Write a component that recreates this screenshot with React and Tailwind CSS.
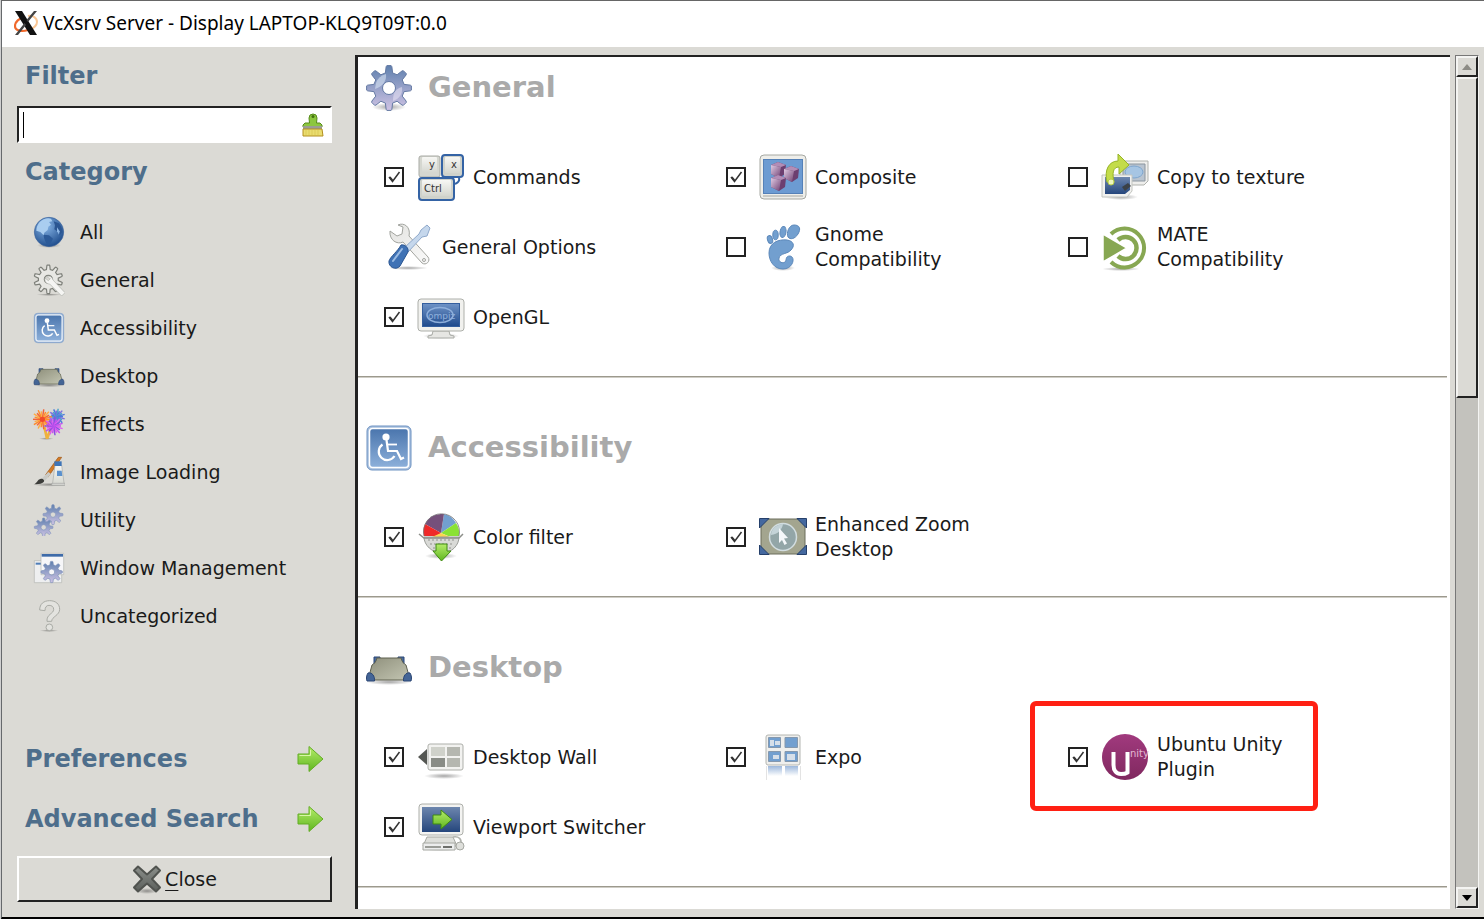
import { useState } from "react";

// Outline of a cog wheel centred on cx, cy
const gearPath = (cx, cy, outer, inner, teeth) => {
  const step = (Math.PI * 2) / teeth;
  const points = [];
  for (let i = 0; i < teeth; i++) {
    const mid = i * step - Math.PI / 2;
    [
      [inner, -0.3],
      [outer - 1, -0.17],
      [outer, -0.12],
      [outer, 0.12],
      [outer - 1, 0.17],
      [inner, 0.3],
    ].forEach(([r, t]) => {
      const a = mid + t * step;
      points.push(
        `${(cx + r * Math.cos(a)).toFixed(2)} ${(cy + r * Math.sin(a)).toFixed(2)}`
      );
    });
  }
  return `M${points.join("L")}Z`;
};

const circlePath = (cx, cy, r) =>
  `M${cx - r} ${cy}a${r} ${r} 0 1 0 ${r * 2} 0a${r} ${r} 0 1 0 ${-r * 2} 0Z`;

const Gradient = ({ id, from, to, x2 = 0, y2 = 1 }) => (
  <linearGradient id={id} x1="0" y1="0" x2={x2} y2={y2}>
    <stop offset="0" stopColor={from} />
    <stop offset="1" stopColor={to} />
  </linearGradient>
);

const Gradients = () => (
  <svg width="0" height="0" className="absolute" aria-hidden="true">
    <defs>
      <Gradient id="gear" from="#5f80ae" to="#cfc3e4" />
      <Gradient id="access" from="#4a75ad" to="#8db0da" />
      <Gradient id="desk" from="#8f907c" to="#c3c5b2" x2={1} />
      <Gradient id="screen" from="#6f93c6" to="#1f4a8c" />
      <Gradient id="navy" from="#6d86ae" to="#25467c" />
      <Gradient id="green" from="#b4ec6a" to="#5fb61f" />
      <Gradient id="key" from="#f7f7f4" to="#d4d6cf" />
      <Gradient id="plum" from="#a13a7e" to="#80285f" />
      <Gradient id="cube" from="#e0cbe3" to="#6f4073" x2={1} />
      <Gradient id="steel" from="#8b8f8b" to="#5b5f5b" />
      <Gradient id="fade" from="#9db8dc" to="#ffffff" />
      <Gradient id="tool" from="#e3e3e0" to="#fafafa" x2={1} />
      <radialGradient id="globe" cx="0.4" cy="0.3" r="0.7">
        <stop offset="0" stopColor="#86b4e6" />
        <stop offset="1" stopColor="#22508f" />
      </radialGradient>
      <radialGradient id="shadow">
        <stop offset="0" stopColor="#000" stopOpacity="0.35" />
        <stop offset="1" stopColor="#000" stopOpacity="0" />
      </radialGradient>
    </defs>
  </svg>
);

const Icon = ({ className = "size-12", children }) => (
  <svg
    viewBox="0 0 48 48"
    className={`${className} shrink-0`}
    fill="none"
    aria-hidden="true"
  >
    {children}
  </svg>
);

const XLogo = () => (
  <svg viewBox="0 0 24 24" className="size-6 shrink-0" aria-hidden="true">
    <path
      d="M11 6C5 7 1 11 1 15c0 5 7 6 13 4"
      fill="none"
      stroke="#f0692c"
      strokeWidth="2.200"
    />
    <path
      d="M14 5c5-1 9 2 9 6 0 3-3 6-6 7"
      fill="none"
      stroke="#fbc795"
      strokeWidth="2"
    />
    <path d="M1 0h7l15 24h-7z" fill="#111" />
    <path d="M20 0h3L14 11l-1.500-2zM1 24h3l8-10-1.500-2z" fill="#444" />
  </svg>
);

const GearIcon = ({ className }) => (
  <Icon className={className}>
    <ellipse cx="24" cy="43" rx="17" ry="4" fill="url(#shadow)" />
    <path
      d={gearPath(24, 24, 22.5, 15.5, 8) + circlePath(24, 24, 6.5)}
      fill="url(#gear)"
      fillRule="evenodd"
      stroke="#6479a3"
      strokeLinejoin="round"
    />
    <path d="M11 19a14 14 0 0 1 10-9c1 7-4 13-11 15z" fill="#d8e4f4" opacity="0.6" />
    <path d="M37 23c-7 2-9 6-9 14 6-2 10-7 9-14z" fill="#eee8f8" opacity="0.5" />
  </Icon>
);

const AccessIcon = ({ className }) => (
  <Icon className={className}>
    <rect x="2" y="2" width="44" height="44" rx="5" fill="#a9c1df" stroke="#6f93c2" />
    <rect x="4.500" y="4.500" width="39" height="39" rx="3" fill="url(#access)" stroke="#fff" strokeWidth="1.500" />
    <circle cx="21" cy="13" r="3.600" fill="#fff" />
    <path d="M21.500 16l1.500 11h9l4 8 3-1.500" stroke="#fff" strokeWidth="2.200" />
    <path d="M22 20.500h10" stroke="#fff" strokeWidth="1.800" />
    <path d="M17.500 20.500a8.500 8.500 0 1 0 12 11.500" stroke="#fff" strokeWidth="2.200" />
  </Icon>
);

const DesktopIcon = ({ className }) => (
  <Icon className={className}>
    <ellipse cx="24" cy="38" rx="23" ry="3" fill="url(#shadow)" />
    <path d="M9 13h6v5l-6 2zM33 13h6v7l-6-2z" fill="#4a6a9c" stroke="#2b4674" />
    <path
      d="M12 14h24c1 4 3 6 5 7l3 11c-3 1-4 3-4 4H8c0-2-1-3-4-4l3-11c2-1 4-3 5-7z"
      fill="url(#desk)"
      stroke="#5e604f"
    />
    <path
      d="M3 29c4-1 7 3 6.500 8H2c-1-2-.5-6 1-8zM45 29c-4-1-7 3-6.500 8H46c1-2 .5-6-1-8z"
      fill="#446596"
      stroke="#2b4674"
    />
  </Icon>
);

const GlobeIcon = ({ className }) => (
  <Icon className={className}>
    <ellipse cx="24" cy="44" rx="18" ry="4" fill="url(#shadow)" />
    <circle cx="24" cy="24" r="22" fill="url(#globe)" stroke="#3b629c" />
    <path
      d="M10 9c5-5 12-7 17-5l2 4-5 1 3 4-4 3-1 5-5 4-1 4-5-5-6-2c0-5 2-9 5-13z"
      fill="#a9cdf0"
    />
    <path d="M16 28l8 1 6 5-3 6-5 5c-2-5-6-10-6-17z" fill="#2c5a98" />
    <path d="M31 8l8 3c3 4 5 8 5 13l-4 5-4-6-4-3 1-6z" fill="#2b5692" />
    <path d="M36 17l4 6-1 5-3-5z" fill="#8fb8e6" />
  </Icon>
);

const SettingsIcon = ({ className }) => (
  <Icon className={className}>
    <ellipse cx="24" cy="46" rx="19" ry="2" fill="url(#shadow)" />
    <path
      d={gearPath(23, 23, 21.5, 15, 10) + circlePath(23, 23, 6)}
      fill="#e8e8e4"
      fillRule="evenodd"
      stroke="#7d7f79"
      strokeWidth="1.800"
    />
    <path
      d="M20 19c4-2 9 0 10 5l18 19-5 5-18-18c-5 0-8-4-7-9l5 4 3-3z"
      fill="#f5f5f3"
      stroke="#aeb0aa"
    />
  </Icon>
);

const EffectsIcon = ({ className }) => {
  const burst = (cx, cy, r, colors) =>
    Array.from({ length: 22 }, (_, i) => {
      const a = (i * Math.PI * 2) / 22;
      const len = i % 2 ? r : r - 3;
      return (
        <path
          key={`${cx}-${i}`}
          d={`M${cx} ${cy}L${cx + len * Math.cos(a)} ${cy + len * Math.sin(a)}`}
          stroke={colors[i % colors.length]}
          strokeWidth="2.200"
        />
      );
    });
  return (
    <Icon className={className}>
      <ellipse cx="20" cy="46" rx="11" ry="2" fill="url(#shadow)" />
      <path d="M17 28l4 18M27 30l-6 16" stroke="#efb23c" strokeWidth="4" />
      {burst(36, 13, 12, ["#4c7ddb", "#7b6ee0", "#4ba3c9"])}
      {burst(14, 17, 15, ["#ff8a2a", "#ffab45", "#f2643a"])}
      {burst(31, 27, 14, ["#c44ff0", "#e05cf2", "#8a4fe0"])}
      <circle cx="14" cy="17" r="4" fill="#f04a2c" />
    </Icon>
  );
};

const ImageIcon = ({ className }) => (
  <Icon className={className}>
    <ellipse cx="25" cy="43" rx="24" ry="3" fill="url(#shadow)" />
    <path d="M38 2h5L23 31l-4-3z" fill="#d47a26" stroke="#9b5413" />
    <path d="M23 24l4 3-9 10-5-3z" fill="#c9cac6" />
    <path d="M1 42c5 0 5-7 11-8 4 0 6 3 4 5-3 3-10 4-15 3z" fill="#3c3d3a" />
    <path d="M33 14h10l4 30H29z" fill="url(#key)" stroke="#a9aba6" />
    <path d="M32 8h11v7H32z" fill="#3f75b7" />
    <path d="M36 22h7l1 8h-8z" fill="#5a90cd" />
    <path d="M28 41h20v3H28z" fill="#d8d9d5" stroke="#999" strokeWidth="0.800" />
  </Icon>
);

const UtilityIcon = ({ className }) => (
  <Icon className={className}>
    <path
      d={gearPath(30, 16, 15, 10, 8) + circlePath(30, 16, 4)}
      fill="url(#gear)"
      fillRule="evenodd"
      stroke="#8496bd"
    />
    <path
      d={gearPath(16, 35, 14, 9.5, 8) + circlePath(16, 35, 4)}
      fill="url(#gear)"
      fillRule="evenodd"
      stroke="#8496bd"
    />
  </Icon>
);

const WindowIcon = ({ className }) => (
  <Icon className={className}>
    <path d="M2 13h41v33H2z" fill="#eeeff0" stroke="#b3b5b2" />
    <path d="M4 16h9v3H4z" fill="#4f7db7" />
    <path d="M12 2h34v32H12z" fill="#f6f6f8" stroke="#b3b5b2" />
    <path d="M13 3h32v4H13z" fill="#3e6ba9" />
    <path
      d={gearPath(28, 30, 16, 11, 8) + circlePath(28, 30, 4.5)}
      fill="url(#gear)"
      fillRule="evenodd"
      stroke="#7c8fb8"
    />
  </Icon>
);

const QuestionIcon = ({ className }) => (
  <Icon className={className}>
    <ellipse cx="24" cy="46" rx="14" ry="2" fill="url(#shadow)" />
    <path
      d="M10 15C10 6 16 1 25 1s15 5 15 13c0 9-12 11-12 18h-7c-1-11 10-11 10-18 0-4-3-6-7-6-4 0-6 3-6 8z"
      fill="#e3e3df"
      stroke="#a9aba5"
      strokeWidth="1.500"
    />
    <circle cx="24.500" cy="41" r="5" fill="#e3e3df" stroke="#a9aba5" strokeWidth="1.500" />
  </Icon>
);

const CommandsIcon = () => (
  <Icon>
    <path d="M41 23c3 4 0 8-5 8" stroke="#3463a5" strokeWidth="2" />
    <rect x="2" y="3" width="21" height="21" rx="2" fill="#d5d7d0" stroke="#a9aba5" />
    <rect x="5" y="4" width="15" height="16" rx="1" fill="url(#key)" />
    <rect x="25" y="2" width="21" height="22" rx="3" fill="#cfd2cb" stroke="#3463a5" strokeWidth="2" />
    <rect x="28" y="4" width="15" height="16" rx="1" fill="url(#key)" />
    <rect x="2" y="25" width="35" height="22" rx="3" fill="#cfd2cb" stroke="#3463a5" strokeWidth="2" />
    <rect x="5" y="27" width="29" height="16" rx="1" fill="url(#key)" />
    <g fill="#333" fontFamily="DejaVu Sans, sans-serif" fontSize="10">
      <text x="12" y="15">y</text>
      <text x="34" y="15">x</text>
      <text x="7" y="39">Ctrl</text>
    </g>
  </Icon>
);

const Cube = ({ x, y }) => (
  <g transform={`translate(${x} ${y})`}>
    <path d="M0 3l7-3 8 3-1 9-6 4-8-4z" fill="#6c3f70" />
    <path d="M0 3l7-3 8 3-5 2z" fill="#b28db6" />
    <path d="M0 3l10 2-2 11-8-4z" fill="url(#cube)" />
  </g>
);

const CompositeIcon = () => (
  <Icon>
    <rect x="1" y="2" width="46" height="44" rx="4" fill="#eeeeea" stroke="#a6a8a2" />
    <path d="M4 43h40" stroke="#c9cac6" strokeWidth="2" />
    <rect x="4.500" y="6.500" width="39" height="34" fill="#6c9bd2" stroke="#5581b8" />
    <Cube x="12" y="9" />
    <Cube x="25" y="13" />
    <Cube x="12" y="22" />
  </Icon>
);

const CopyIcon = () => (
  <Icon>
    <ellipse cx="20" cy="44" rx="17" ry="3" fill="url(#shadow)" />
    <path d="M19 8h28v20l-4 4H19z" fill="#eeeeec" stroke="#b0b2ad" />
    <path d="M22 11h22v17H22z" fill="#b9c4d0" stroke="#8c969f" />
    <ellipse cx="33" cy="19" rx="9" ry="6" fill="#a6c5e3" stroke="#7ea6cf" />
    <path d="M1 22h30v16l-5 6H1z" fill="#f1f1ef" stroke="#c3c5c0" />
    <path d="M4 24h25v13l-5 4H4z" fill="url(#navy)" />
    <path d="M21 34l6-4 3 3-6 5z" fill="#3b4147" />
    <path
      d="M6 29C3 17 8 8 17 8V1l11 11-10 9v-7c-6 0-7 6-5 15z"
      fill="#c3dc4a"
      stroke="#97b428"
    />
    <circle cx="10" cy="29" r="3" fill="#edf5bd" stroke="#b9cf45" />
  </Icon>
);

const ToolsIcon = () => (
  <Icon>
    <ellipse cx="22" cy="45" rx="20" ry="2" fill="url(#shadow)" />
    <path
      d="M4 8l7 5 5-2 1-7-5-2c6-3 13 2 11 11l19 21c3 4-2 9-6 6L17 19C11 22 3 17 4 8z"
      fill="url(#tool)"
      stroke="#a2a49f"
    />
    <circle cx="38" cy="37" r="1.500" stroke="#a2a49f" />
    <path d="M35 7l6-5 3 3-3 8-5 1-14 15-4-4 15-14z" fill="#c5d7ec" stroke="#8fa9cb" />
    <path
      d="M15 22c4-1 8 3 7 7l-8 14c-4 5-12 1-11-5 1-4 9-10 12-16z"
      fill="#3f72b5"
      stroke="#2a5591"
    />
    <path d="M16 26L7 38" stroke="#9bbce4" strokeWidth="2" strokeLinecap="round" />
  </Icon>
);

const GnomeIcon = () => (
  <Icon>
    <ellipse cx="24" cy="45" rx="12" ry="3" fill="url(#shadow)" />
    <g fill="#729fcf" stroke="#5c88ba" transform="translate(1 0)">
      <path d="M34 2c6 0 7 4 4 9s-8 6-10 3c-2-4 1-12 6-12z" />
      <ellipse cx="23" cy="9" rx="3" ry="5.500" transform="rotate(10 23 9)" />
      <ellipse cx="15.500" cy="12" rx="2.700" ry="4.800" />
      <ellipse cx="10" cy="16.500" rx="2.500" ry="4" transform="rotate(-18 10 16.500)" />
      <path d="M9 30c0-10 9-14 18-13 7 1 8 6 4 10-3 4-11 3-12 8-1 4 4 6 6 4s0-6 5-6c6 1 3 13-7 13C14 46 9 38 9 30z" />
    </g>
  </Icon>
);

const MateIcon = () => (
  <Icon>
    <ellipse cx="20" cy="46" rx="19" ry="2" fill="url(#shadow)" />
    <path d="M10 11a19.500 19.500 0 1 1 0 28" stroke="#87a752" strokeWidth="4" />
    <path d="M17 17a11 11 0 1 1 0 16" stroke="#87a752" strokeWidth="4.500" />
    <path d="M2 11l24 14L2 39z" fill="#87a752" stroke="#fff" strokeWidth="1.500" />
  </Icon>
);

const OpenGLIcon = () => (
  <Icon>
    <ellipse cx="24" cy="43" rx="18" ry="3" fill="url(#shadow)" />
    <path d="M16 38h16l1 4 4 1v2H11v-2l4-1z" fill="#e6e6e3" stroke="#a9aba6" />
    <rect x="1" y="6" width="46" height="32" rx="3" fill="#f1f1ee" stroke="#adafaa" />
    <rect x="5.500" y="10.500" width="37" height="23" fill="url(#screen)" stroke="#355f9e" />
    <ellipse cx="23" cy="22" rx="13" ry="7.500" stroke="#8fb0dc" strokeWidth="1.500" />
    <text
      x="11"
      y="26"
      fill="#8fb0dc"
      fontFamily="DejaVu Sans, sans-serif"
      fontSize="9"
    >
      ompiz
    </text>
  </Icon>
);

const ColorFilterIcon = () => (
  <Icon>
    <ellipse cx="24" cy="43" rx="16" ry="3" fill="url(#shadow)" />
    <path d="M24 20V1a18 18 0 0 0-16 10z" fill="#75507b" />
    <path d="M24 20L27 1a18 18 0 0 1 12 9z" fill="#729fcf" />
    <path d="M24 20L27 1H23z" fill="#75507b" />
    <path d="M24 20L8 11a18 18 0 0 0-1 12h13z" fill="#ef2929" />
    <path d="M24 20l15-10a18 18 0 0 1 3 13H31z" fill="#8ae234" />
    <path d="M24 20l9 4H15z" fill="#fcd64f" />
    <path d="M7 23a18 18 0 1 1 35 0" stroke="#777" strokeWidth="0.800" />
    <path d="M7 24h35c0 8-7 16-17 16S7 32 7 24z" fill="#d9dad7" stroke="#9b9d98" />
    <path
      d="M11 27h27M13 31h24M16 35h18"
      stroke="#a9aba6"
      strokeWidth="1.500"
      strokeDasharray="2 2"
    />
    <path d="M2 21l5 4h35l4-4" stroke="#8d8f8a" strokeWidth="1.500" />
    <path d="M19 31h11v7h4L24.500 48 16 38h3z" fill="url(#green)" stroke="#3f8a12" />
  </Icon>
);

const ZoomDesktopIcon = () => (
  <Icon>
    <path d="M2 6h44v35H2z" fill="#a3a58f" stroke="#6b6d5b" />
    <g fill="#44689f" stroke="#26406b">
      <path d="M.5 5.500H10L.5 15zM47.500 5.500H38l9.500 9.500zM.5 41.500H10L.5 32zM47.500 41.500H38l9.500-9.500z" />
    </g>
    <circle cx="24" cy="24" r="13.500" fill="#93a6a8" stroke="#d2dde0" strokeWidth="1.500" />
    <path d="M12 22c0-6 6-11 12-11-1 6-5 10-12 11z" fill="#c4d3d8" />
    <path d="M20 15l9 10-4 .5 3 5-2.500 1.500-2.500-5-3 3z" fill="#f4f7fa" />
  </Icon>
);

const WallIcon = () => (
  <Icon>
    <ellipse cx="27" cy="43" rx="20" ry="3" fill="url(#shadow)" />
    <path d="M1 24l9-8v16z" fill="#555753" />
    <rect x="11" y="11" width="35" height="26" rx="2" fill="#f2f2f0" stroke="#adafaa" />
    <path d="M14 14h14v9H14z" fill="#cfd1ca" />
    <path d="M30 14h13v9H30zM30 25h13v9H30z" fill="#b5b7b0" />
    <path d="M14 25h14v9H14z" fill="#898c86" />
  </Icon>
);

const ExpoIcon = () => (
  <Icon>
    <path d="M7.500 33v14M41.500 33v14" stroke="#e3e3e3" />
    <path d="M9 33h14v10H9zM26 33h13v10H26z" fill="url(#fade)" />
    <rect x="7" y="2" width="34" height="30" rx="2" fill="#efefed" stroke="#b4b6b1" />
    <g fill="#729fcf" stroke="#8598ad">
      <path d="M9.500 4.500h12v10h-12zM26 4.500h12.500v10H26zM9.500 18.500h12v10h-12zM26 18.500h12.500v10H26z" />
    </g>
    <path d="M11 7h4v6h-4zM16 8h5v4h-5zM14 22h6v4h-6zM28 21h8v6h-8z" fill="#d6dfe9" />
  </Icon>
);

const UnityIcon = () => (
  <Icon>
    <circle cx="24" cy="24" r="23" fill="url(#plum)" />
    <path d="M12.500 19v13c0 6 3 9 7.500 9 2.500 0 5-.5 6.500-1.500V19" stroke="#fff" strokeWidth="4" />
    <text
      x="29"
      y="24"
      fill="#e2b9d3"
      fontFamily="DejaVu Sans, sans-serif"
      fontSize="10"
    >
      nity
    </text>
  </Icon>
);

const ViewportIcon = () => (
  <Icon>
    <ellipse cx="24" cy="46" rx="20" ry="2" fill="url(#shadow)" />
    <path d="M10 34h26l4 9H6z" fill="#dedfdb" stroke="#a6a8a2" />
    <path d="M6 40h32v7H6z" fill="#eceded" stroke="#a6a8a2" />
    <path d="M8 43h16v2H8z" fill="#9a9c97" />
    <path d="M26 43h9v2h-9z" fill="#6d6f6b" />
    <path d="M36 34c6-1 9 2 8 8" stroke="#b0b2ad" strokeWidth="1.500" />
    <circle cx="43" cy="43" r="4" fill="#dedfdb" stroke="#a6a8a2" />
    <rect x="2" y="1" width="44" height="31" rx="3" fill="#f3f3f1" stroke="#adafaa" />
    <path d="M5 4h38v25H5z" fill="url(#navy)" />
    <path d="M16 12h8V7l11 9.500L24 26v-5h-8z" fill="url(#green)" stroke="#3f8a12" />
  </Icon>
);

const BrushIcon = () => (
  <svg viewBox="0 0 24 26" className="h-[26px] w-6 shrink-0" aria-hidden="true">
    <path
      d="M8.500 11l-.5-5a4 4 0 1 1 8 0l-.5 5h3.500l2 2v2H2v-2l2-2z"
      fill="#8cc63f"
      stroke="#568b1a"
    />
    <circle cx="12" cy="4.500" r="1.500" fill="#41700f" />
    <path d="M2 14h19v3H2z" fill="#9a9c94" />
    <path d="M2 17h19l1 7H2z" fill="#eadd70" stroke="#b38f1e" />
    <path d="M5 18v5M8 18v5M11 18v5M14 18v5M17 18v5" stroke="#dccb58" />
  </svg>
);

const ArrowIcon = () => (
  <svg viewBox="0 0 28 28" className="size-7 shrink-0" aria-hidden="true">
    <path
      d="M2 9h11V1.500L27 14 13 26.500V19H2z"
      fill="url(#green)"
      stroke="#63ad25"
    />
    <path d="M3.500 10.500h11V5" fill="none" stroke="#d8f5a8" />
  </svg>
);

const CloseIcon = () => (
  <svg viewBox="0 0 30 30" className="size-[30px] shrink-0" aria-hidden="true">
    <ellipse cx="15" cy="27" rx="11" ry="3" fill="url(#shadow)" />
    <path
      d="M6 2.500l9 8 9-8 4 4L20 15l8 8.500-4 4-9-8-9 8-4-4L10 15 2 6.500z"
      fill="url(#steel)"
      stroke="#50534f"
      strokeWidth="2"
      strokeLinejoin="round"
    />
  </svg>
);

const categories = [
  { name: "All", icon: GlobeIcon },
  { name: "General", icon: SettingsIcon },
  { name: "Accessibility", icon: AccessIcon },
  { name: "Desktop", icon: DesktopIcon },
  { name: "Effects", icon: EffectsIcon },
  { name: "Image Loading", icon: ImageIcon },
  { name: "Utility", icon: UtilityIcon },
  { name: "Window Management", icon: WindowIcon },
  { name: "Uncategorized", icon: QuestionIcon },
];

const sections = [
  {
    title: "General",
    icon: GearIcon,
    plugins: [
      { name: "Commands", icon: CommandsIcon, enabled: true },
      { name: "Composite", icon: CompositeIcon, enabled: true },
      { name: "Copy to texture", icon: CopyIcon, enabled: false },
      { name: "General Options", icon: ToolsIcon },
      { name: "Gnome Compatibility", icon: GnomeIcon, enabled: false },
      { name: "MATE Compatibility", icon: MateIcon, enabled: false },
      { name: "OpenGL", icon: OpenGLIcon, enabled: true },
    ],
  },
  {
    title: "Accessibility",
    icon: AccessIcon,
    plugins: [
      { name: "Color filter", icon: ColorFilterIcon, enabled: true },
      { name: "Enhanced Zoom Desktop", icon: ZoomDesktopIcon, enabled: true },
    ],
  },
  {
    title: "Desktop",
    icon: DesktopIcon,
    plugins: [
      { name: "Desktop Wall", icon: WallIcon, enabled: true },
      { name: "Expo", icon: ExpoIcon, enabled: true },
      {
        name: "Ubuntu Unity Plugin",
        icon: UnityIcon,
        enabled: true,
        highlighted: true,
      },
      { name: "Viewport Switcher", icon: ViewportIcon, enabled: true },
    ],
  },
];

const Plugin = ({ plugin }) => {
  const [enabled, setEnabled] = useState(plugin.enabled);
  const PluginIcon = plugin.icon;

  // General Options is always on, so it has no tick box
  if (plugin.enabled === undefined) {
    return (
      <button className="flex h-[70px] items-center gap-2 pl-[2px] text-left">
        <PluginIcon />
        <span>{plugin.name}</span>
      </button>
    );
  }

  return (
    <div className="relative flex h-[70px] items-center">
      {plugin.highlighted && (
        <div className="pointer-events-none absolute -top-[21px] -left-[38px] h-[110px] w-72 rounded-md border-5 border-[#ff2013]" />
      )}
      <label className="flex items-center">
        <span className="grid size-5 shrink-0">
          <input
            type="checkbox"
            checked={enabled}
            onChange={(e) => setEnabled(e.target.checked)}
            className="peer col-start-1 row-start-1 size-5 appearance-none border-2 border-[#222] bg-white"
          />
          <svg
            viewBox="0 0 20 20"
            className="pointer-events-none invisible col-start-1 row-start-1 size-5 peer-checked:visible"
            aria-hidden="true"
          >
            <path
              d="M5 10l3.500 4.500L15.500 5"
              fill="none"
              stroke="#333"
              strokeWidth="1.500"
            />
            <path d="M5 10.500l1.500-1 2.500 3-.5 2z" fill="#333" />
          </svg>
        </span>
        <span className="ml-[13px] flex items-center gap-2">
          <PluginIcon />
          <span className="w-[180px]">{plugin.name}</span>
        </span>
      </label>
    </div>
  );
};

const Section = ({ section }) => {
  const SectionIcon = section.icon;
  return (
    <section className="mr-[3px] mb-[39px] border-b border-[#cfcdc6]">
      <div className="border-b border-[#9c998d] pb-6">
        <h2 className="flex h-[61px] items-center gap-[15px] pl-[7px] text-[29px] font-bold text-[#aaa]">
          <SectionIcon className="size-12" />
          {section.title}
        </h2>
        <div className="mt-6 grid grid-cols-3 pr-[37px] pl-[26px]">
          {section.plugins.map((plugin) => (
            <Plugin key={plugin.name} plugin={plugin} />
          ))}
        </div>
      </div>
    </section>
  );
};

const Sidebar = () => {
  const [filter, setFilter] = useState("");
  return (
    <aside className="flex w-[353px] shrink-0 flex-col pr-[23px] pb-[15px] pl-[15px]">
      <label
        htmlFor="filter"
        className="mt-[13px] ml-2 text-2xl font-bold text-[#4e6e8b]"
      >
        Filter
      </label>
      <div className="mt-[14px] flex h-[37px] items-center border-2 border-t-[#222] border-r-white border-b-white border-l-[#222] bg-white pr-[5px]">
        <input
          id="filter"
          type="text"
          value={filter}
          onChange={(e) => setFilter(e.target.value)}
          className="ml-1 h-[26px] min-w-0 flex-1 border-l border-black outline-none"
        />
        <button aria-label="Clear filter">
          <BrushIcon />
        </button>
      </div>
      <h2 className="mt-[13px] ml-2 text-2xl font-bold text-[#4e6e8b]">
        Category
      </h2>
      <nav className="mt-5 flex flex-col">
        {categories.map(({ name, icon: CategoryIcon }) => (
          <button
            key={name}
            className="flex h-12 items-center gap-[15px] pl-4 text-left"
          >
            <CategoryIcon className="size-8" />
            {name}
          </button>
        ))}
      </nav>
      <div className="mt-auto flex flex-col">
        {["Preferences", "Advanced Search"].map((name) => (
          <button
            key={name}
            className="flex h-[60px] items-center justify-between pr-2 pl-2 text-2xl font-bold text-[#4e6e8b]"
          >
            {name}
            <ArrowIcon />
          </button>
        ))}
      </div>
      <button className="mt-[7px] flex h-[46px] items-center justify-center gap-[3px] border-2 border-t-white border-r-[#222] border-b-[#222] border-l-white">
        <CloseIcon />
        <span>
          <u className="underline-offset-4">C</u>lose
        </span>
      </button>
    </aside>
  );
};

const bevel =
  "border-2 border-t-[#f4f4f2] border-r-[#222] border-b-[#222] border-l-[#f4f4f2] bg-[#dbdad5]";

const Scrollbar = () => (
  <div className="flex w-6 shrink-0 flex-col border border-r-[#f4f4f2] border-b-[#f4f4f2] border-t-[#777] border-l-[#777] bg-[#c3c2bd]">
    <button
      aria-label="Scroll up"
      className={`flex h-[21px] items-center justify-center ${bevel}`}
    >
      <svg viewBox="0 0 10 6" className="h-[6px] w-[10px]" aria-hidden="true">
        <path d="M0 6l5-6 5 6z" fill="#8d8c86" />
      </svg>
    </button>
    <div className={`h-[321px] ${bevel}`} />
    <button
      aria-label="Scroll down"
      className={`mt-auto flex h-[21px] items-center justify-center ${bevel}`}
    >
      <svg viewBox="0 0 10 6" className="h-[6px] w-[10px]" aria-hidden="true">
        <path d="M0 0l5 6 5-6z" fill="#000" />
      </svg>
    </button>
  </div>
);

const App = () => {
  return (
    <div className="border-l border-[#d0d0d0]">
      <Gradients />
      <div className="flex h-screen flex-col border-t border-b-2 border-l border-t-[#666] border-b-black border-l-[#66696c] bg-[#dbdad5] font-['DejaVu_Sans',sans-serif] text-[19px] leading-[25px] text-[#1a1a1a]">
        <header className="flex h-[46px] shrink-0 items-center gap-[5px] bg-white pb-[2px] pl-3 font-['Noto_Sans',sans-serif] text-[19px] text-black">
          <XLogo />
          <h1>VcXsrv Server - Display LAPTOP-KLQ9T09T:0.0</h1>
        </header>
        <div className="flex min-h-0 flex-1">
          <Sidebar />
          <main className="mt-2 mb-2 min-w-0 flex-1 overflow-hidden border-t-2 border-l-3 border-[#222] bg-white">
            {sections.map((section) => (
              <Section key={section.title} section={section} />
            ))}
          </main>
          <div className="mt-2 mr-[5px] mb-2 ml-[5px] flex">
            <Scrollbar />
          </div>
        </div>
      </div>
    </div>
  );
};

export default App;
